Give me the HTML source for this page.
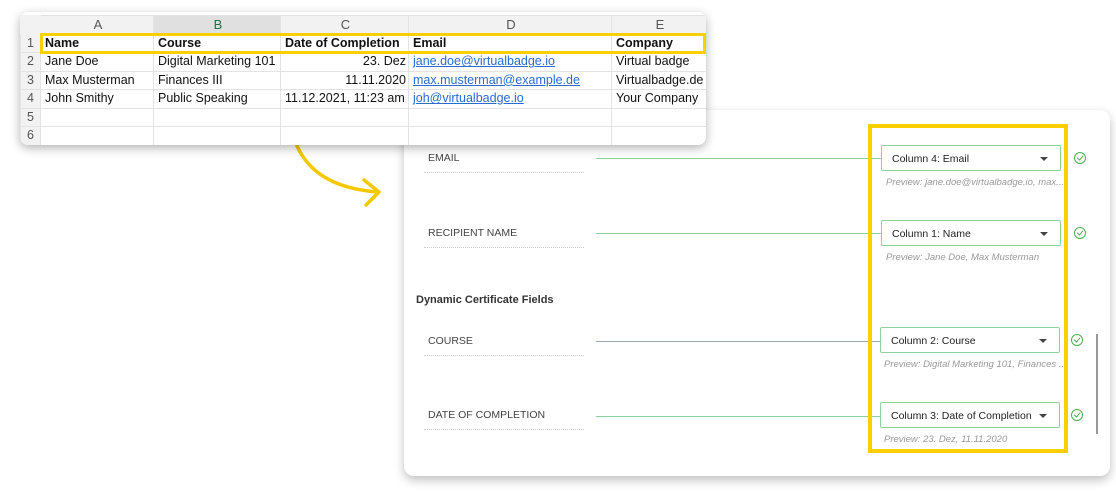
<!DOCTYPE html>
<html><head><meta charset="utf-8"><style>
body{margin:0;width:1116px;height:493px;background:#fff;position:relative;overflow:hidden;font-family:"Liberation Sans",sans-serif}
.card{position:absolute;left:404px;top:110px;width:706px;height:366px;background:#fff;border-radius:10px;box-shadow:0 4px 10px rgba(0,0,0,.25)}
.sheet{position:absolute;left:20px;top:12px;width:686px;height:133px;background:#fff;border-radius:8px;box-shadow:0 3px 10px rgba(0,0,0,.3);overflow:hidden;font-size:12.5px;color:#111}
.sheet table{border-collapse:collapse;position:absolute;left:0;top:3px;table-layout:fixed;width:686px}
.sheet td{border:1px solid #e3e3e3;height:17.5px;padding:0 2px 0 4px;white-space:nowrap;line-height:17px;overflow:hidden}
.hd td{background:#f2f2f2;color:#555;text-align:center;font-size:13px}
.rn{background:#f2f2f2;color:#555;text-align:center;font-weight:normal;padding:0!important}
a{color:#2a6bd0;text-decoration:underline}
.lbl{position:absolute;left:424px;width:156px;font-size:10.5px;color:#444;border-bottom:1px dotted #ccc;padding:0 0 8px 4px}
.ln{position:absolute;left:596px;height:1px;background:#8fd19a}
.sel{position:absolute;width:180px;height:26px;border:1px solid #8fd19a;border-radius:2px;font-size:10.5px;color:#222;line-height:26px;padding-left:10px;box-sizing:border-box;background:#fff}
.sel:after{content:"";position:absolute;right:12px;top:11px;border:4px solid transparent;border-top:4px solid #444}
.pv{position:absolute;font-size:9.5px;color:#999;font-style:italic;white-space:nowrap}
.ck{position:absolute;width:10px;height:10px;border:1.5px solid #4caf50;border-radius:50%}
.ck:after{content:"";position:absolute;left:3px;top:1px;width:3px;height:5px;border:solid #4caf50;border-width:0 1.5px 1.5px 0;transform:rotate(40deg)}
</style></head><body>
<div class="card"></div>
<div class="lbl" style="top:152px">EMAIL</div>
<div class="lbl" style="top:227px">RECIPIENT NAME</div>
<div style="position:absolute;left:416px;top:294px;font-size:11px;font-weight:bold;color:#333">Dynamic Certificate Fields</div>
<div class="lbl" style="top:335px">COURSE</div>
<div class="lbl" style="top:409px">DATE OF COMPLETION</div>
<div class="ln" style="top:158px;width:286px"></div>
<div class="ln" style="top:233px;width:286px"></div>
<div class="ln" style="top:341px;width:284px;background:#9ab"></div>
<div class="ln" style="top:416px;width:284px"></div>
<div class="sel" style="left:881px;top:145px">Column 4: Email</div>
<div class="pv" style="left:886px;top:177px">Preview: jane.doe@virtualbadge.io, max...</div>
<div class="sel" style="left:881px;top:220px">Column 1: Name</div>
<div class="pv" style="left:886px;top:252px">Preview: Jane Doe, Max Musterman</div>
<div class="sel" style="left:880px;top:327px">Column 2: Course</div>
<div class="pv" style="left:884px;top:359px">Preview: Digital Marketing 101, Finances ...</div>
<div class="sel" style="left:880px;top:402px">Column 3: Date of Completion</div>
<div class="pv" style="left:884px;top:434px">Preview: 23. Dez, 11.11.2020</div>
<div class="ck" style="left:1074px;top:152px"></div>
<div class="ck" style="left:1074px;top:227px"></div>
<div class="ck" style="left:1071px;top:334px"></div>
<div class="ck" style="left:1071px;top:409px"></div>
<div style="position:absolute;left:1096px;top:334px;width:2px;height:100px;background:#999"></div>
<div style="position:absolute;left:868px;top:124px;width:192px;height:321px;border:4px solid #fcd000"></div>
<svg style="position:absolute;left:280px;top:140px" width="110" height="70"><path d="M17 6 C28 30 50 48 97 52" fill="none" stroke="#f5c900" stroke-width="3.5" stroke-linecap="round"/><path d="M84 40 L99 52 L86 65" fill="none" stroke="#f5c900" stroke-width="3.5" stroke-linecap="round" stroke-linejoin="round"/></svg>
<div class="sheet">
<div style="position:absolute;left:4px;top:5px;border-left:15px solid transparent;border-bottom:13px solid #217346"></div>
<table>
<colgroup><col style="width:20px"><col style="width:113px"><col style="width:127px"><col style="width:128px"><col style="width:203px"><col style="width:95px"></colgroup>
<tr class="hd"><td style="background:#f2f2f2;border-color:#f2f2f2"></td><td>A</td><td style="background:#e0e0e0;color:#217346">B</td><td>C</td><td>D</td><td>E</td></tr>
<tr style="font-weight:bold"><td class="rn">1</td><td>Name</td><td>Course</td><td>Date of Completion</td><td>Email</td><td>Company</td></tr>
<tr><td class="rn">2</td><td>Jane Doe</td><td>Digital Marketing 101</td><td style="text-align:right">23. Dez</td><td><a>jane.doe@virtualbadge.io</a></td><td>Virtual badge</td></tr>
<tr><td class="rn">3</td><td>Max Musterman</td><td>Finances III</td><td style="text-align:right">11.11.2020</td><td><a>max.musterman@example.de</a></td><td>Virtualbadge.de</td></tr>
<tr><td class="rn">4</td><td>John Smithy</td><td>Public Speaking</td><td>11.12.2021, 11:23 am</td><td><a>joh@virtualbadge.io</a></td><td>Your Company</td></tr>
<tr><td class="rn">5</td><td></td><td></td><td></td><td></td><td></td></tr>
<tr><td class="rn">6</td><td></td><td></td><td></td><td></td><td></td></tr>
</table>
<div style="position:absolute;left:20px;top:21px;width:660px;height:15px;border:3px solid #fcd000"></div>
</div>
</body></html>
